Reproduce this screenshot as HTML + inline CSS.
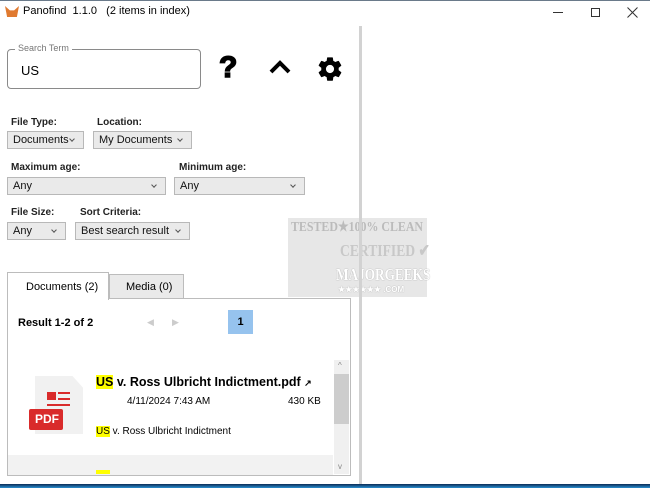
<!DOCTYPE html>
<html><head><meta charset="utf-8"><style>
*{box-sizing:border-box;margin:0;padding:0}
body{width:650px;height:488px;background:#fff;font-family:"Liberation Sans",sans-serif;position:relative;overflow:hidden;color:#000}
.a{position:absolute}
.lbl{font-size:10px;font-weight:bold;color:#222}
.sel{position:absolute;height:18px;background:#eaeaea;border:1px solid #b8b8b8;font-size:11px;padding:2px 0 0 5px;color:#111}
.sel:after{content:"";position:absolute;right:9px;top:5px;width:3px;height:3px;border-right:1px solid #555;border-bottom:1px solid #555;transform:rotate(45deg)}
.wm{font-family:'Liberation Serif',serif;font-weight:bold;white-space:nowrap;transform-origin:0 0}
</style></head><body>
<div class="a" style="left:0;top:0;width:650px;height:1px;background:#6a7a8a"></div>
<div class="a" style="left:5px;top:6px;width:14px;height:11px;background:#e07a30;clip-path:polygon(0 0,35% 40%,65% 40%,100% 0,85% 100%,15% 100%)"></div>
<div class="a" style="left:23px;top:5px;font-size:11px">Panofind&nbsp; 1.1.0 &nbsp;&nbsp;(2 items in index)</div>
<div class="a" style="left:553px;top:12px;width:10px;height:1px;background:#333"></div>
<div class="a" style="left:591px;top:8px;width:9px;height:9px;border:1px solid #333"></div>
<svg class="a" style="left:627px;top:7px" width="11" height="11"><path d="M0.5 0.5L10.5 10.5M10.5 0.5L0.5 10.5" stroke="#333" stroke-width="1"/></svg>

<div class="a" style="left:7px;top:49px;width:194px;height:40px;border:1px solid #8a8a8a;border-radius:4px"></div>
<div class="a" style="left:15px;top:43px;background:#fff;padding:0 3px;font-size:9px;color:#777">Search Term</div>
<div class="a" style="left:21px;top:63px;font-size:13px">US</div>
<div class="a" style="left:219px;top:51px;font-size:30px;font-weight:bold;-webkit-text-stroke:1.5px #000">?</div>
<svg class="a" style="left:268px;top:58px" width="24" height="18" viewBox="0 0 24 18"><path d="M3 14 L12 5 L21 14" stroke="#000" stroke-width="4" fill="none"/></svg>
<svg class="a" style="left:316px;top:55px" width="28" height="28" viewBox="0 0 24 24"><path fill="#000" d="M19.4 13c.04-.33.06-.66.06-1s-.02-.67-.06-1l2.1-1.650c.2-.15.24-.42.12-.64l-2-3.46c-.12-.22-.39-.3-.61-.22l-2.49 1c-.52-.4-1.080-.73-1.690-.98l-.38-2.65A.49.49 0 0 0 14 2h-4c-.25 0-.46.18-.49.42l-.38 2.65c-.61.25-1.17.59-1.69.98l-2.49-1c-.23-.09-.49 0-.61.22l-2 3.46c-.13.22-.07.49.12.64L4.57 11c-.04.33-.07.67-.07 1s.02.67.06 1l-2.1 1.65c-.2.15-.24.42-.12.64l2 3.46c.12.22.39.3.61.22l2.49-1c.52.4 1.08.73 1.69.98l.38 2.65c.03.24.24.42.49.42h4c.25 0 .46-.18.49-.42l.38-2.65c.61-.25 1.17-.59 1.69-.98l2.49 1c.23.09.49 0 .61-.22l2-3.46c.12-.22.07-.49-.12-.64L19.4 13zM12 15.5A3.5 3.5 0 1 1 12 8.5a3.5 3.5 0 0 1 0 7z"/></svg>

<div class="a lbl" style="left:11px;top:117px">File Type:</div>
<div class="a lbl" style="left:97px;top:117px">Location:</div>
<div class="sel" style="left:7px;top:131px;width:77px">Documents</div>
<div class="sel" style="left:93px;top:131px;width:99px">My Documents</div>
<div class="a lbl" style="left:11px;top:162px">Maximum age:</div>
<div class="a lbl" style="left:179px;top:162px">Minimum age:</div>
<div class="sel" style="left:7px;top:177px;width:159px">Any</div>
<div class="sel" style="left:174px;top:177px;width:131px">Any</div>
<div class="a lbl" style="left:11px;top:207px">File Size:</div>
<div class="a lbl" style="left:80px;top:207px">Sort Criteria:</div>
<div class="sel" style="left:7px;top:222px;width:59px">Any</div>
<div class="sel" style="left:75px;top:222px;width:115px">Best search result</div>

<div class="a" style="left:288px;top:218px;width:139px;height:79px;background:#e4e4e4;opacity:.9"></div>
<div class="a wm" style="left:291px;top:219px;font-size:14px;color:#bbb;transform:scaleX(.85)">TESTED★100% CLEAN</div>
<div class="a wm" style="left:340px;top:241px;font-size:17px;color:#c8c8c8;transform:scaleX(.8)">CERTIFIED ✔</div>
<div class="a wm" style="left:336px;top:265px;font-size:17px;color:#fff;text-shadow:0 0 1px #888;transform:scaleX(.78)">MAJORGEEKS</div>
<div class="a" style="left:338px;top:285px;font-size:8px;color:#fff;font-weight:bold;text-shadow:0 0 1px #999">★★★★★★ .COM</div>

<div class="a" style="left:359px;top:26px;width:3px;height:462px;background:#d2d2d2"></div>

<div class="a" style="left:7px;top:298px;width:344px;height:178px;border:1px solid #bcbcbc"></div>
<div class="a" style="left:7px;top:272px;width:102px;height:28px;background:#fff;border:1px solid #bcbcbc;border-bottom:none;font-size:11px;padding:8px 0 0 18px">Documents (2)</div>
<div class="a" style="left:109px;top:274px;width:75px;height:25px;background:#eaeaea;border:1px solid #bcbcbc;font-size:11px;padding:6px 0 0 16px">Media (0)</div>
<div class="a" style="left:18px;top:317px;font-size:11px;font-weight:bold">Result 1-2 of 2</div>
<div class="a" style="left:147px;top:317px;font-size:9px;color:#ccc">◀</div>
<div class="a" style="left:172px;top:317px;font-size:9px;color:#ccc">▶</div>
<div class="a" style="left:228px;top:310px;width:25px;height:24px;background:#96c3ee;font-size:11px;font-weight:bold;text-align:center;padding-top:6px">1</div>

<div class="a" style="left:334px;top:360px;width:15px;height:114px;background:#f0f0f0"></div>
<div class="a" style="left:334px;top:374px;width:15px;height:50px;background:#cdcdcd"></div>
<div class="a" style="left:338px;top:361px;font-size:8px;color:#888">^</div>
<div class="a" style="left:338px;top:462px;font-size:8px;color:#888">v</div>
<div class="a" style="left:8px;top:455px;width:325px;height:20px;background:#f2f2f2"></div>
<div class="a" style="left:96px;top:470px;width:14px;height:4px;background:#ff0"></div>

<div class="a" style="left:35px;top:376px;width:48px;height:58px;background:#f1f1f1;clip-path:polygon(0 0,78% 0,100% 20%,100% 100%,0 100%)"></div>
<div class="a" style="left:47px;top:392px;width:9px;height:8px;background:#d92b2b"></div>
<div class="a" style="left:58px;top:392px;width:12px;height:2px;background:#d92b2b"></div>
<div class="a" style="left:58px;top:398px;width:12px;height:2px;background:#d92b2b"></div>
<div class="a" style="left:47px;top:404px;width:23px;height:2px;background:#d92b2b"></div>
<div class="a" style="left:29px;top:409px;width:34px;height:21px;background:#d92b2b;border-radius:2px;color:#fff;font-weight:bold;font-size:12px;padding:3px 0 0 6px">PDF</div>

<div class="a" style="left:96px;top:375px;font-size:12.5px;font-weight:bold"><span style="background:#ff0">US</span> v. Ross Ulbricht Indictment.pdf <span style="font-size:9px">↗</span></div>
<div class="a" style="left:127px;top:396px;font-size:10px">4/11/2024 7:43 AM</div>
<div class="a" style="left:288px;top:396px;font-size:10px">430 KB</div>
<div class="a" style="left:96px;top:426px;font-size:10px"><span style="background:#ff0">US</span> v. Ross Ulbricht Indictment</div>

<div class="a" style="left:0;top:484px;width:650px;height:4px;background:linear-gradient(#0a2a55,#2a8fd0)"></div>
</body></html>
